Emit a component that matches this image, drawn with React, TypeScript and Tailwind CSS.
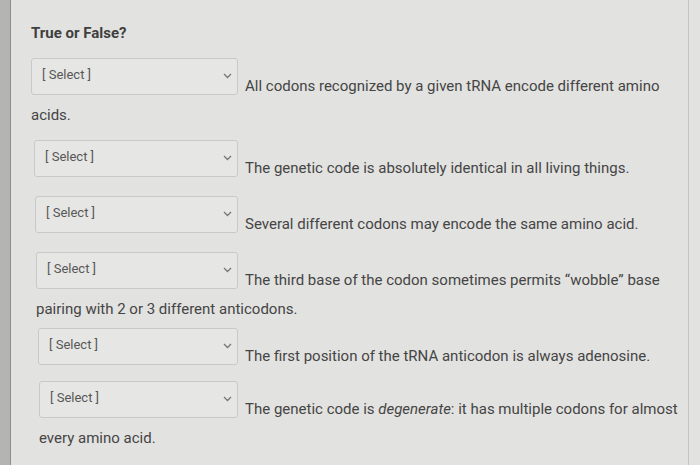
const questions = [
  { text: "All codons recognized by a given tRNA encode different amino acids.", cls: "ml-0 mb-[10px]", w: "w-[207px]" },
  { text: "The genetic code is absolutely identical in all living things.", cls: "ml-[3px] mb-[13px]", w: "w-[204px]" },
  { text: "Several different codons may encode the same amino acid.", cls: "ml-[4px] mb-[13px]", w: "w-[203px]" },
  { text: "The third base of the codon sometimes permits \u201cwobble\u201d base pairing with 2 or 3 different anticodons.", cls: "ml-[5px] mb-[4px]", w: "w-[202px]" },
  { text: "The first position of the tRNA anticodon is always adenosine.", cls: "ml-[7px] mb-[10px]", w: "w-[200px]" },
  {
    text: (
      <>
        The genetic code is <em>degenerate</em>: it has multiple codons for almost every amino acid.
      </>
    ),
    cls: "ml-[8px] mb-0",
    w: "w-[199px]",
  },
];

const Chevron = () => (
  <svg width="9" height="6" viewBox="0 0 9 6" className="absolute right-[5px] top-[14px]">
    <path d="M1 1l3.5 3.5L8 1" fill="none" stroke="#777" strokeWidth="1.3" />
  </svg>
);

const SelectBox = ({ w }: { w: string }) => (
  <span className={`relative inline-block ${w} h-[37px] align-[-4px] overflow-hidden mr-[7px] border border-[#c9c9c7] rounded-[3px] bg-[#e6e6e4]`}>
    <span className="absolute left-[10px] top-[7px] text-[13px] leading-[18px] text-[#575757]">[ Select ]</span>
    <Chevron />
  </span>
);

export default function App() {
  return (
    <div
      className="w-[700px] h-[465px] flex bg-[#e2e2e0] overflow-hidden"
      style={{ fontFamily: "Roboto, 'Liberation Sans', sans-serif" }}
    >
      <div className="w-[11px] shrink-0 bg-[#b4b4b2] border-r border-[#8e8e8c]" />
      <div className="w-[678px] shrink-0 pl-[20px] pt-[23px] border-r border-[#c4c4c2]">
        <h2 className="text-[15px] font-bold text-[#3f3f3f] leading-[20px]">True or False?</h2>
        <div className="mt-[15px] w-[652px]">
          {questions.map((q, i) => (
            <p key={i} className={`text-[15px] leading-[29px] text-[#454545] ${q.cls}`}>
              <SelectBox w={q.w} />
              {q.text}
            </p>
          ))}
        </div>
      </div>
    </div>
  );
}
